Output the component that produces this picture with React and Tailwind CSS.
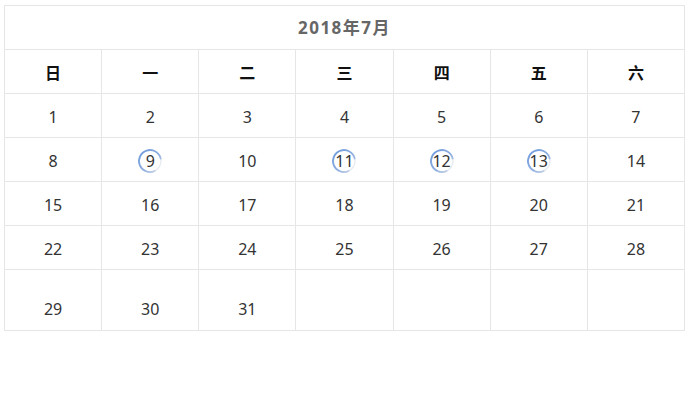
import React from "react";

const weekDays = ["日", "一", "二", "三", "四", "五", "六"];
const marked = [9, 11, 12, 13];

// July 2018 starts on a Sunday
const weeks = [
  [1, 2, 3, 4, 5, 6, 7],
  [8, 9, 10, 11, 12, 13, 14],
  [15, 16, 17, 18, 19, 20, 21],
  [22, 23, 24, 25, 26, 27, 28],
  [29, 30, 31, null, null, null, null],
];

const Ring = () => (
  <svg
    width="28"
    height="28"
    viewBox="0 0 28 28"
    className="absolute left-1/2 top-1/2 -translate-x-1/2 -translate-y-1/2"
  >
    <defs>
      <linearGradient id="ringGrad" x1="0" y1="0" x2="1" y2="1">
        <stop offset="0%" stopColor="#6a98dc" />
        <stop offset="60%" stopColor="#94b2e0" />
        <stop offset="100%" stopColor="#d8dfea" />
      </linearGradient>
    </defs>
    <circle cx="14" cy="14" r="11" fill="none" stroke="#e6eaf1" strokeWidth="1.2" />
    <path
      d="M 18.7 24 A 11 11 0 1 1 24.7 11.5"
      fill="none"
      stroke="url(#ringGrad)"
      strokeWidth="1.8"
      strokeLinecap="round"
    />
  </svg>
);

const App = () => {
  return (
    <div className="w-[688px] h-[399px] bg-white pt-[5px] pl-[4px] font-['Noto_Sans','Noto_Sans_CJK_SC',sans-serif]">
      <table className="w-[681px] border-collapse table-fixed text-[16px] text-[#333]">
        <thead>
          <tr>
            <th
              colSpan={7}
              className="h-[44px] border border-[#e6e6e6] text-[17px] text-[#666] font-bold tracking-[1.5px]"
            >
              2018年7月
            </th>
          </tr>
          <tr>
            {weekDays.map((d) => (
              <th
                key={d}
                className="h-[44px] border border-[#e6e6e6] font-bold text-[#111] font-['Noto_Sans_CJK_SC',sans-serif]"
              >
                {d}
              </th>
            ))}
          </tr>
        </thead>
        <tbody>
          {weeks.map((week, i) => (
            <tr key={i}>
              {week.map((day, j) => (
                <td
                  key={j}
                  className={
                    i === weeks.length - 1
                      ? "h-[61px] border border-[#e6e6e6] text-center align-top pt-[27px]"
                      : "h-[44px] border border-[#e6e6e6] text-center pt-[2px]"
                  }
                >
                  {day && (
                    <span className="relative inline-block leading-5">
                      {marked.includes(day) && <Ring />}
                      <span className="relative">{day}</span>
                    </span>
                  )}
                </td>
              ))}
            </tr>
          ))}
        </tbody>
      </table>
    </div>
  );
};

export default App;
